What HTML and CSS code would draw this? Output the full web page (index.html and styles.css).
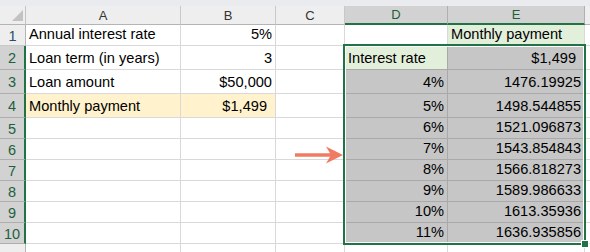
FILE: index.html
```html
<!DOCTYPE html>
<html>
<head>
<meta charset="utf-8">
<link rel="stylesheet" href="styles.css">
</head>
<body>
<div class="band"></div>
<div class="wrap">
  <div class="sheet">
    <div class="corner"><span class="tri"></span></div>
    <div class="hdr">A</div>
    <div class="hdr">B</div>
    <div class="hdr">C</div>
    <div class="hdr on">D</div>
    <div class="hdr on">E</div>
    <div class="hdr end"></div>

    <div class="rh">1</div>
    <div class="c">Annual interest rate</div>
    <div class="c r">5%</div>
    <div class="c"></div>
    <div class="c"></div>
    <div class="c lg">Monthly payment</div>
    <div class="c end"></div>

    <div class="rh on">2</div>
    <div class="c">Loan term (in years)</div>
    <div class="c r">3</div>
    <div class="c"></div>
    <div class="c lg act">Interest rate</div>
    <div class="c g r pad">$1,499</div>
    <div class="c end"></div>

    <div class="rh on">3</div>
    <div class="c">Loan amount</div>
    <div class="c r">$50,000</div>
    <div class="c"></div>
    <div class="c g r">4%</div>
    <div class="c g r">1476.19925</div>
    <div class="c end"></div>

    <div class="rh on">4</div>
    <div class="c peach">Monthly payment</div>
    <div class="c peach r pad">$1,499</div>
    <div class="c"></div>
    <div class="c g r">5%</div>
    <div class="c g r">1498.544855</div>
    <div class="c end"></div>

    <div class="rh on">5</div>
    <div class="c"></div>
    <div class="c"></div>
    <div class="c"></div>
    <div class="c g r">6%</div>
    <div class="c g r">1521.096873</div>
    <div class="c end"></div>

    <div class="rh on">6</div>
    <div class="c"></div>
    <div class="c"></div>
    <div class="c"></div>
    <div class="c g r">7%</div>
    <div class="c g r">1543.854843</div>
    <div class="c end"></div>

    <div class="rh on">7</div>
    <div class="c"></div>
    <div class="c"></div>
    <div class="c"></div>
    <div class="c g r">8%</div>
    <div class="c g r">1566.818273</div>
    <div class="c end"></div>

    <div class="rh on">8</div>
    <div class="c"></div>
    <div class="c"></div>
    <div class="c"></div>
    <div class="c g r">9%</div>
    <div class="c g r">1589.986633</div>
    <div class="c end"></div>

    <div class="rh on">9</div>
    <div class="c"></div>
    <div class="c"></div>
    <div class="c"></div>
    <div class="c g r">10%</div>
    <div class="c g r">1613.35936</div>
    <div class="c end"></div>

    <div class="rh on">10</div>
    <div class="c"></div>
    <div class="c"></div>
    <div class="c"></div>
    <div class="c g r">11%</div>
    <div class="c g r">1636.935856</div>
    <div class="c end"></div>

    <div class="rh last"></div>
    <div class="c blank"></div>
    <div class="c blank"></div>
    <div class="c blank"></div>
    <div class="c blank"></div>
    <div class="c blank"></div>
    <div class="c blank end"></div>
  </div>
  <div class="selbox"></div>
  <div class="handle"></div>
  <svg class="arrow" width="50" height="20" viewBox="0 0 50 20">
    <line x1="0" y1="10" x2="38" y2="10" stroke="#f07a62" stroke-width="3.5"/>
    <polygon points="48,10 31,1.5 36,10 31,18.5" fill="#f07a62"/>
  </svg>
</div>
</body>
</html>
```

FILE: styles.css
```css
html, body {
  margin: 0;
  padding: 0;
  background: #ffffff;
}
body {
  width: 590px;
  height: 252px;
  overflow: hidden;
  font-family: "Liberation Sans", Arial, sans-serif;
  font-size: 14.6px;
  color: #000;
}
.band {
  height: 6px;
  background: #e9ebee;
}
.wrap {
  position: relative;
}
.sheet {
  display: grid;
  grid-template-columns: 26px 155px 95px 69px 103px 137px 5px;
  grid-template-rows: 19px 21px 24px 24px 24px 21px 21px 21px 21px 21px 21px 8px;
}
.sheet > div {
  box-sizing: border-box;
  overflow: hidden;
  white-space: nowrap;
}
.corner {
  background: #eeeeee;
  border-right: 1px solid #c4c4c4;
  border-bottom: 1px solid #b4b4b4;
  position: relative;
}
.tri {
  position: absolute;
  right: 2px;
  bottom: 3px;
  width: 0;
  height: 0;
  border-left: 11px solid transparent;
  border-bottom: 11px solid #c2c2c2;
}
.hdr {
  background: #eeeeee;
  border-right: 1px solid #c8c8c8;
  border-bottom: 1px solid #b4b4b4;
  display: flex;
  align-items: center;
  justify-content: center;
  font-size: 13px;
  color: #333;
}
.hdr.on {
  background: #d2d2d2;
  border-bottom: 2px solid #217346;
  border-right-color: #b0b0b0;
  color: #1e5f3c;
}
.hdr.end {
  border-right: none;
}
.rh {
  background: #eeeeee;
  border-right: 1px solid #b4b4b4;
  border-bottom: 1px solid #c8c8c8;
  display: flex;
  align-items: center;
  justify-content: center;
  font-size: 14.5px;
  color: #2b4a6b;
  padding-top: 1px;
}
.rh.on {
  background: #d2d2d2;
  border-right: 2px solid #217346;
  border-bottom-color: #aeaeae;
  color: #1e5f3c;
}
.rh.last {
  border-bottom: none;
}
.c {
  border-right: 1px solid #d9d9d9;
  border-bottom: 1px solid #d9d9d9;
  display: flex;
  align-items: flex-end;
  padding: 0 3px 2px 3px;
  line-height: 17px;
}
.c.r {
  justify-content: flex-end;
}
.c.pad {
  padding-right: 8px;
}
.c.peach {
  background: #fff2cc;
}
.c.lg {
  background: #e2efda;
}
.c.g {
  background: #c6c6c6;
  border-right-color: #a9a9a9;
  border-bottom-color: #a9a9a9;
}
.c.act {
  border-right-color: #a9a9a9;
  border-bottom-color: #a9a9a9;
}
.c.end {
  border-right: none;
}
.c.blank {
  border-bottom: none;
}
.selbox {
  position: absolute;
  left: 343px;
  top: 38px;
  width: 243px;
  height: 201px;
  box-sizing: border-box;
  border: 2px solid #217346;
  box-shadow: inset 0 0 0 1px #ffffff;
  pointer-events: none;
}
.handle {
  position: absolute;
  left: 581px;
  top: 234px;
  width: 6px;
  height: 6px;
  background: #217346;
  border: 1px solid #ffffff;
}
.arrow {
  position: absolute;
  left: 295px;
  top: 139px;
}
```
